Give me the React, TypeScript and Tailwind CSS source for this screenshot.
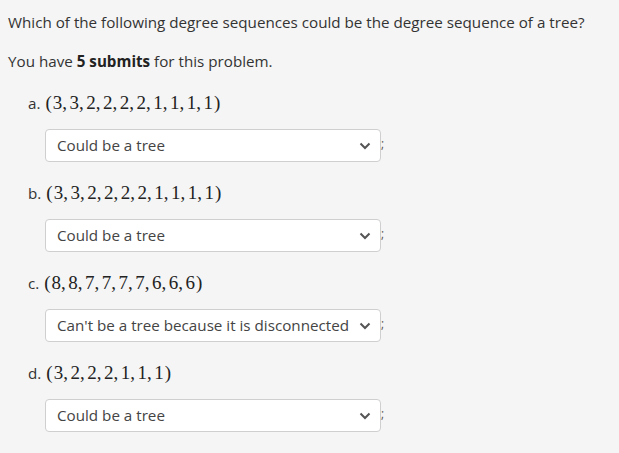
import React from 'react';

type Part = { label: string; seq: number[]; answer: string };

const parts: Part[] = [
  { label: 'a.', seq: [3, 3, 2, 2, 2, 2, 1, 1, 1, 1], answer: 'Could be a tree' },
  { label: 'b.', seq: [3, 3, 2, 2, 2, 2, 1, 1, 1, 1], answer: 'Could be a tree' },
  { label: 'c.', seq: [8, 8, 7, 7, 7, 7, 6, 6, 6], answer: "Can't be a tree because it is disconnected" },
  { label: 'd.', seq: [3, 2, 2, 2, 1, 1, 1], answer: 'Could be a tree' },
];

const Chevron = () => (
  <svg width="12" height="8" viewBox="0 0 12 8" className="shrink-0">
    <path d="M1.5 1.5 L6 6 L10.5 1.5" fill="none" stroke="#555" strokeWidth="2" />
  </svg>
);

// math typeset like KaTeX: tight comma spacing
const Sequence = ({ seq }: { seq: number[] }) => (
  <span className="flex items-center text-[19px] text-[#222]" style={{ fontFamily: '"Liberation Serif", serif' }}>
    <span className="mr-[1px]">(</span>
    {seq.map((n, i) => (
      <span key={i} className={i < seq.length - 1 ? 'mr-[2.5px]' : 'mr-[1px]'}>
        {n}
        {i < seq.length - 1 ? ',' : ''}
      </span>
    ))}
    <span>)</span>
  </span>
);

const AnswerSelect = ({ value }: { value: string }) => (
  <div className="flex items-center">
    <div className="flex h-[33px] w-[336px] shrink-0 items-center justify-between rounded-[4px] border border-[#cfcfcf] bg-white pl-[11px] pr-[9px]">
      <span className="text-[15.2px] text-[#444]">{value}</span>
      <Chevron />
    </div>
    <span className="-mt-[4px] text-[12px] leading-none text-[#555]">;</span>
  </div>
);

export default function App() {
  return (
    <div
      className="min-h-[453px] w-[619px] bg-[#f5f5f5] px-[8px] pt-[11px] text-[15.2px] text-[#333]"
      style={{ fontFamily: '"Open Sans", sans-serif' }}
    >
      <p className="leading-[22px]">Which of the following degree sequences could be the degree sequence of a tree?</p>
      <p className="mt-[17px] leading-[22px]">
        You have <b className="font-bold text-[#222]">5 submits</b> for this problem.
      </p>
      <div className="mt-[19px] flex flex-col">
        {parts.map((p, i) => (
          <div key={i} className="flex flex-col">
            <div className="flex h-[24px] items-center pl-[20px]">
              <span className="mr-[5px]">{p.label}</span>
              <Sequence seq={p.seq} />
            </div>
            <div className="mt-[14px] mb-[19px] pl-[37px]">
              <AnswerSelect value={p.answer} />
            </div>
          </div>
        ))}
      </div>
    </div>
  );
}
